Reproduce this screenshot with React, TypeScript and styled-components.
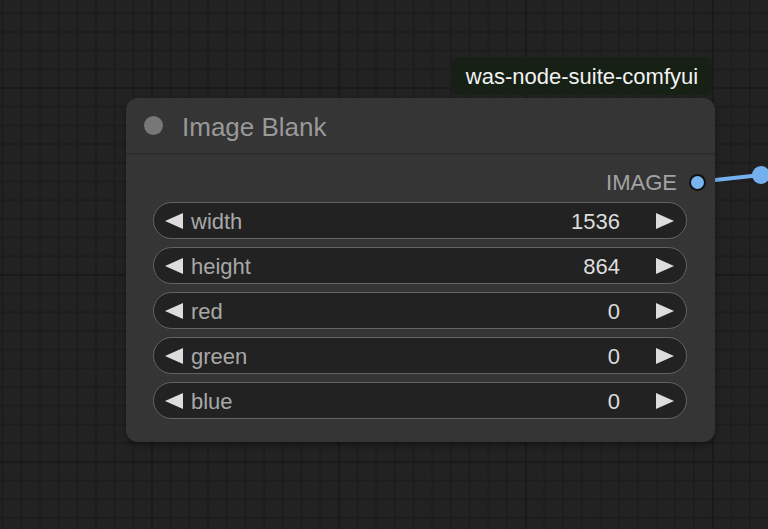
import styled, { createGlobalStyle } from "styled-components";

const GlobalStyle = createGlobalStyle`
  html, body {
    margin: 0;
    padding: 0;
    background: #222222;
    overflow: hidden;
  }
  * {
    box-sizing: border-box;
  }
`;

const Canvas = styled.div`
  position: relative;
  width: 768px;
  height: 529px;
  overflow: hidden;
  font-family: "Liberation Sans", Arial, sans-serif;
  background-color: #222222;
  background-image: linear-gradient(to right, #1a1a1a 2px, transparent 2px),
    linear-gradient(to bottom, #1a1a1a 2px, transparent 2px),
    linear-gradient(to right, #1d1d1d 1.5px, transparent 1.5px),
    linear-gradient(to bottom, #1d1d1d 1.5px, transparent 1.5px);
  background-size: 187px 187px, 187px 187px, 18.7px 18.7px, 18.7px 18.7px;
  background-position: 151px 87px, 151px 87px, 151px 87px, 151px 87px;
`;

const Badge = styled.div`
  position: absolute;
  left: 452px;
  top: 57px;
  width: 260px;
  height: 38px;
  border-radius: 8px;
  background: #162015;
  color: #f2f2f2;
  font-size: 22px;
  display: flex;
  align-items: center;
  justify-content: center;
  padding-top: 1px;
`;

const Node = styled.div`
  position: absolute;
  left: 126px;
  top: 98px;
  width: 589px;
  height: 344px;
  border-radius: 12px;
  background: #353535;
  box-shadow: 0 3px 6px rgba(0, 0, 0, 0.35);
  display: flex;
  flex-direction: column;
`;

const TitleBar = styled.div`
  height: 57px;
  display: flex;
  align-items: center;
  gap: 19px;
  padding-left: 18px;
  border-bottom: 2px solid #2d2d2d;
`;

const TitleDot = styled.span`
  width: 19px;
  height: 19px;
  border-radius: 50%;
  background: #777777;
`;

const Title = styled.span`
  color: #999999;
  font-size: 26px;
  line-height: 1;
  margin-top: 3px;
`;

const Body = styled.div`
  display: flex;
  flex-direction: column;
  padding: 15px 28px 0 27px;
`;

const OutputRow = styled.div`
  height: 24px;
  margin-bottom: 8px;
  display: flex;
  align-items: center;
  justify-content: flex-end;
  gap: 12px;
  margin-right: -19px;
`;

const OutputLabel = styled.span`
  color: #a3a3a3;
  font-size: 22px;
  padding-top: 2px;
`;

const OutputDot = styled.span`
  width: 17px;
  height: 17px;
  border-radius: 50%;
  background: #78b4f0;
  border: 2px solid #111111;
`;

const WidgetList = styled.div`
  display: flex;
  flex-direction: column;
  gap: 8px;
`;

const Widget = styled.div`
  height: 37px;
  border-radius: 19px;
  background: #222222;
  border: 1.5px solid #646464;
  display: flex;
  align-items: center;
  padding: 0 12px 0 11px;
  font-size: 22px;
`;

const Arrow = styled.span<{ $dir: "left" | "right" }>`
  width: 0;
  height: 0;
  border-top: 8px solid transparent;
  border-bottom: 8px solid transparent;
  ${(p) =>
    p.$dir === "left"
      ? "border-right: 18px solid #dddddd;"
      : "border-left: 18px solid #dddddd;"}
`;

const Label = styled.span`
  color: #a8a8a8;
  margin-left: 8px;
  flex: 1;
  padding-top: 3px;
`;

const Value = styled.span`
  color: #dddddd;
  margin-right: 36px;
  padding-top: 3px;
`;

const Link = styled.svg`
  position: absolute;
  left: 0;
  top: 0;
  pointer-events: none;
`;

const widgets = [
  { name: "width", value: "1536" },
  { name: "height", value: "864" },
  { name: "red", value: "0" },
  { name: "green", value: "0" },
  { name: "blue", value: "0" },
];

export default function App() {
  return (
    <>
      <GlobalStyle />
      <Canvas>
        <Link width="768" height="529">
          <path d="M706 181 L761 175" stroke="#74b0ee" strokeWidth="4" fill="none" />
          <circle cx="761" cy="175" r="9" fill="#74b0ee" />
        </Link>
        <Node>
          <TitleBar>
            <TitleDot />
            <Title>Image Blank</Title>
          </TitleBar>
          <Body>
            <OutputRow>
              <OutputLabel>IMAGE</OutputLabel>
              <OutputDot />
            </OutputRow>
            <WidgetList>
              {widgets.map((w) => (
                <Widget key={w.name}>
                  <Arrow $dir="left" />
                  <Label>{w.name}</Label>
                  <Value>{w.value}</Value>
                  <Arrow $dir="right" />
                </Widget>
              ))}
            </WidgetList>
          </Body>
        </Node>
        <Badge>was-node-suite-comfyui</Badge>
      </Canvas>
    </>
  );
}
